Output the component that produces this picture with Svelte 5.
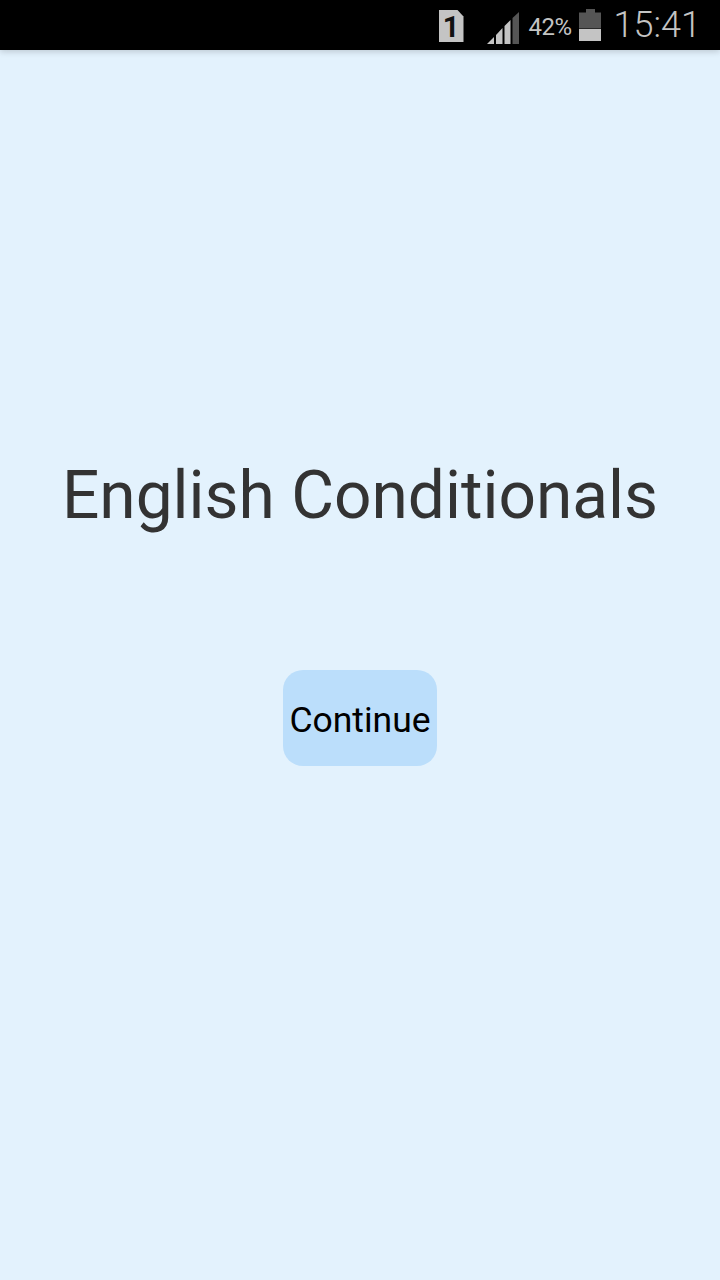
<script>
  let title = "English Conditionals";
</script>

<div class="screen">
  <header class="statusbar">
    <span class="sim">1</span>
    <svg class="signal" viewBox="0 0 32 32" aria-hidden="true">
      <!-- four bars under one rising edge, last one is out of range -->
      <path d="M0 32 L7 25 V32 Z" fill="#c4c4c4" />
      <path d="M9 32 V23 L15.5 16 V32 Z" fill="#c4c4c4" />
      <path d="M17.5 32 V14 L23.5 8 V32 Z" fill="#c4c4c4" />
      <path d="M25.5 32 V6 L32 0 V32 Z" fill="#555" />
    </svg>
    <span class="percent">42%</span>
    <svg class="battery" viewBox="0 0 22 32" aria-hidden="true">
      <path d="M7 0 H16 V3.5 H22 V19.5 H0 V3.5 H7 Z" fill="#555" />
      <rect y="20" width="22" height="12" fill="#c4c4c4" />
    </svg>
    <span class="clock">15:41</span>
  </header>

  <main class="content">
    <h1>{title}</h1>
    <button type="button" class="continue">Continue</button>
  </main>
</div>

<style>
  :global(body) {
    margin: 0;
    background: #e3f2fd;
  }

  .screen {
    height: 1280px;
    display: flex;
    flex-direction: column;
    font-family: Roboto, "Liberation Sans", sans-serif;
    background: #e3f2fd;
  }

  .statusbar {
    flex: 0 0 50px;
    box-sizing: border-box;
    display: flex;
    justify-content: flex-end;
    align-items: flex-start;
    padding-right: 19px;
    background: #000;
    box-shadow: 0 2px 6px rgba(0, 0, 0, 0.16);
    color: #c4c4c4;
    z-index: 1;
  }

  .sim {
    width: 25px;
    height: 32px;
    margin-top: 10px;
    background: #c4c4c4;
    clip-path: polygon(0 0, 76% 0, 100% 20%, 100% 100%, 0 100%);
    color: #111;
    font-size: 29px;
    font-weight: 700;
    line-height: 34px;
    text-align: center;
  }

  .signal {
    width: 32px;
    height: 32px;
    margin: 12px 0 0 23px;
  }

  .percent {
    margin: 13px 0 0 10px;
    font-size: 24px;
    line-height: 28px;
    letter-spacing: -0.5px;
  }

  .battery {
    width: 22px;
    height: 32px;
    margin: 9px 0 0 7px;
  }

  .clock {
    margin: 4px 0 0 13px;
    font-size: 36px;
    line-height: 42px;
    font-weight: 300;
  }

  .content {
    flex: 1;
    display: flex;
    flex-direction: column;
    align-items: center;
    padding-top: 408px;
  }

  h1 {
    margin: 0;
    color: #333;
    font-size: 65.8px;
    line-height: 76px;
    font-weight: 400;
    white-space: nowrap;
  }

  .continue {
    margin-top: 136px;
    width: 154px;
    height: 96px;
    padding: 4px 0 0;
    border: 0;
    border-radius: 20px;
    background: #bbdefb;
    color: #000;
    font-family: inherit;
    font-size: 35.5px;
  }
</style>
